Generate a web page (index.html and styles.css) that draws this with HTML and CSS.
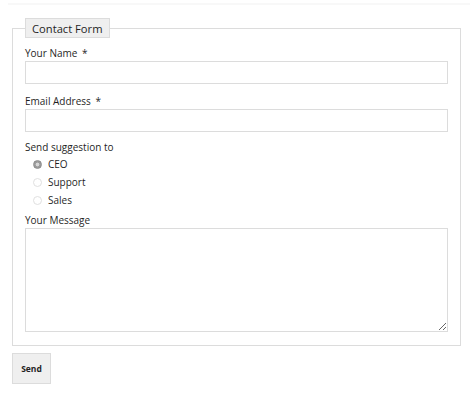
FILE: index.html
```html
<!DOCTYPE html>
<html lang="en">
<head>
  <meta charset="UTF-8">
  <title>Contact</title>
  <link rel="stylesheet" href="styles.css">
</head>
<body>
  <div class="top-rule"></div>

  <form class="contact" onsubmit="return false">
    <fieldset class="box">
      <legend class="box-title">Contact Form</legend>

      <div class="field">
        <label class="field-label" for="name">Your Name <span class="req">*</span></label>
        <input class="text-input" type="text" id="name">
      </div>

      <div class="field">
        <label class="field-label" for="email">Email Address <span class="req">*</span></label>
        <input class="text-input" type="email" id="email">
      </div>

      <div class="field field-radios">
        <div class="field-label">Send suggestion to</div>
        <label class="radio-row"><input class="radio" type="radio" name="to" checked> CEO</label>
        <label class="radio-row"><input class="radio" type="radio" name="to"> Support</label>
        <label class="radio-row"><input class="radio" type="radio" name="to"> Sales</label>
      </div>

      <div class="field field-last">
        <label class="field-label" for="msg">Your Message</label>
        <textarea class="text-area" id="msg"></textarea>
      </div>
    </fieldset>

    <button type="submit" class="send-btn">Send</button>
  </form>
</body>
</html>
```

FILE: styles.css
```css
:root {
  --line: #dcdcdc;
  --muted-bg: #efefef;
  --text: #1f1f1f;
}

body {
  margin: 0;
  font-family: 'Open Sans', 'DejaVu Sans', sans-serif;
  font-size: 10px;
  color: var(--text);
  background: #fff;
}

.top-rule {
  height: 2px;
  margin: 3px 4px 0 8px;
  background: #f8f8f8;
}

.contact {
  padding: 0 13px 0 12px;
}

.box {
  margin: 13px 0 0;
  padding: 0 12px 13px;
  border: 1px solid var(--line);
  min-width: 0;
}

.box-title {
  margin-left: 0;
  padding: 0 6px;
  height: 20px;
  line-height: 19px;
  box-sizing: border-box;
  font-size: 11.2px;
  background: var(--muted-bg);
  border: 1px solid var(--line);
}

.field {
  display: flex;
  flex-direction: column;
  margin-top: 10px;
}

.box-title + .field {
  margin-top: 8px;
}

.field-label {
  display: block;
  line-height: 14px;
  margin-bottom: 1px;
}

.req {
  margin-left: 2px;
}

.text-input {
  height: 23px;
  box-sizing: border-box;
  border: 1px solid var(--line);
  font: inherit;
  padding: 2px 4px;
  margin: 0;
}

.field-radios {
  margin-top: 8px;
}

.radio-row {
  display: flex;
  align-items: center;
  height: 18px;
  padding-left: 8px;
  gap: 6px;
}

.radio {
  appearance: none;
  -webkit-appearance: none;
  width: 9px;
  height: 9px;
  margin: 0;
  border: 1px solid #e0e0e0;
  border-radius: 50%;
  background: #fff;
}

.radio:checked {
  border-color: #8d8d8d;
  background: radial-gradient(circle, #d6d6d6 0 1.6px, #9c9c9c 2.2px);
}

.field-last {
  margin-top: 4px;
}

.text-area {
  height: 104px;
  box-sizing: border-box;
  border: 1px solid var(--line);
  font: inherit;
  margin: 0;
}

.send-btn {
  margin-top: 7px;
  width: 39px;
  height: 31px;
  padding: 0;
  font-family: inherit;
  font-size: 8.5px;
  font-weight: 700;
  color: var(--text);
  background: var(--muted-bg);
  border: 1px solid var(--line);
}
```
